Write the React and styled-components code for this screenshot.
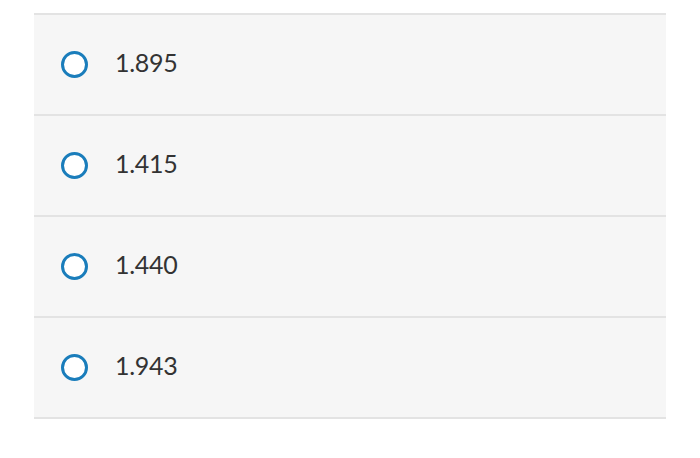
import React from 'react'
import styled, { createGlobalStyle } from 'styled-components'

const Global = createGlobalStyle`
  body {
    margin: 0;
    background: #ffffff;
    font-family: Lato, "Open Sans", sans-serif;
  }
`

const Page = styled.div`
  padding: 13px 0 0 34px;
`

const List = styled.div`
  width: 632px;
  border-bottom: 2px solid #e3e3e3;
`

const Option = styled.label`
  display: flex;
  align-items: center;
  height: 99px;
  padding-left: 27px;
  background: #f6f6f6;
  border-top: 2px solid #e3e3e3;
  cursor: pointer;
`

const Radio = styled.span`
  box-sizing: border-box;
  width: 27px;
  height: 27px;
  border-radius: 50%;
  border: 3px solid #1a7dbb;
  background: #ffffff;
  flex-shrink: 0;
`

const Value = styled.span`
  margin-left: 27px;
  margin-bottom: 5px;
  font-size: 25px;
  color: #333333;
  letter-spacing: -0.3px;
`

const options = ['1.895', '1.415', '1.440', '1.943']

const App = () => {
  return (
    <Page>
      <Global />
      <List>
        {options.map((o) => (
          <Option key={o}>
            <Radio />
            <Value>{o}</Value>
          </Option>
        ))}
      </List>
    </Page>
  )
}

export default App
